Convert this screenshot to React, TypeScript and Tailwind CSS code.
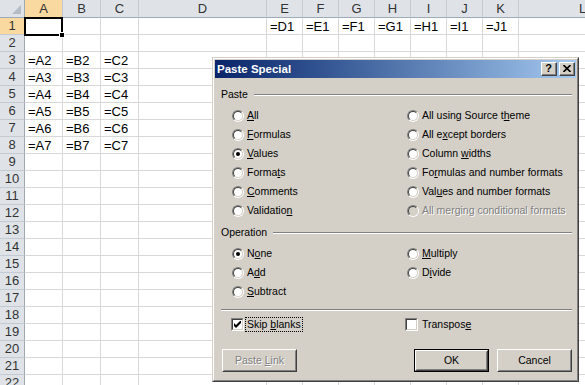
import React from "react";

const COLS = ["A", "B", "C", "D", "E", "F", "G", "H", "I", "J", "K", "L"];

function cellText(row: number, col: string): string {
  if (row === 1) {
    const idx = COLS.indexOf(col);
    if (idx >= 4 && idx <= 10) return `=${COLS[idx - 1]}1`;
  }
  if (row >= 3 && row <= 8 && ["A", "B", "C"].includes(col)) {
    return `=${col}${row - 1}`;
  }
  return "";
}

function Radio({ checked, disabled }: { checked?: boolean; disabled?: boolean }) {
  return (
    <span className="ml-px flex h-[12px] w-[12px] shrink-0 rounded-full border border-t-[#808080] border-l-[#808080] border-r-white border-b-white">
      <span
        className={`flex flex-1 items-center justify-center rounded-full border border-t-[#404040] border-l-[#404040] border-r-[#d4d0c8] border-b-[#d4d0c8] ${
          disabled ? "bg-[#d4d0c8]" : "bg-white"
        }`}
      >
        {checked && <span className="h-[4px] w-[4px] rounded-full bg-black" />}
      </span>
    </span>
  );
}

function Checkbox({ checked }: { checked?: boolean }) {
  return (
    <span className="flex h-[13px] w-[13px] shrink-0 border border-t-[#808080] border-l-[#808080] border-r-white border-b-white">
      <span className="flex flex-1 items-center justify-center border border-t-[#404040] border-l-[#404040] border-r-[#d4d0c8] border-b-[#d4d0c8] bg-white">
        {checked && (
          <svg width="7" height="7" viewBox="0 0 7 7">
            <path d="M0 2v3l2 2 5-5V-1L2 4z" fill="#000" />
          </svg>
        )}
      </span>
    </span>
  );
}

function Option({
  children,
  checked,
  disabled,
}: {
  children: React.ReactNode;
  checked?: boolean;
  disabled?: boolean;
}) {
  return (
    <div className="flex h-[19px] min-w-0 items-center gap-[3px]">
      <Radio checked={checked} disabled={disabled} />
      <span
        className={
          disabled
            ? "whitespace-nowrap text-[#808080] [text-shadow:1px_1px_0_#fff]"
            : "whitespace-nowrap"
        }
      >
        {children}
      </span>
    </div>
  );
}

function GroupLabel({ children }: { children: React.ReactNode }) {
  return (
    <div className="flex h-[13px] items-center">
      <span>{children}</span>
      <div className="ml-[6px] h-[2px] flex-1 border-t border-b border-t-[#808080] border-b-white" />
    </div>
  );
}

function Button({
  children,
  isDefault,
  disabled,
}: {
  children: React.ReactNode;
  isDefault?: boolean;
  disabled?: boolean;
}) {
  return (
    <div className={`flex h-[23px] w-[75px] ${isDefault ? "border border-black" : ""}`}>
      <div className="flex flex-1 border border-t-white border-l-white border-r-[#404040] border-b-[#404040]">
        <div
          className={`flex flex-1 items-center justify-center border border-t-[#d4d0c8] border-l-[#d4d0c8] border-r-[#808080] border-b-[#808080] ${
            disabled ? "text-[#808080] [text-shadow:1px_1px_0_#fff]" : ""
          }`}
        >
          <span className="whitespace-pre">{children}</span>
        </div>
      </div>
    </div>
  );
}

function TitleButton({ children }: { children: React.ReactNode }) {
  return (
    <div className="flex h-[14px] w-[16px] border border-t-white border-l-white border-r-[#404040] border-b-[#404040] bg-[#d4d0c8]">
      <div className="flex flex-1 items-center justify-center border-r border-b border-r-[#808080] border-b-[#808080] text-[11px] font-bold leading-none text-black">
        {children}
      </div>
    </div>
  );
}

function Sheet() {
  const rows = Array.from({ length: 22 }, (_, i) => i + 1);
  return (
    <div className="grid grid-cols-[25px_38px_38px_38px_128px_36px_36px_36px_36px_36px_36px_36px_128px] grid-rows-[18px_repeat(22,17px)] font-['Liberation_Sans',Arial,sans-serif] text-[13px] leading-[16px] text-black">
      <div className="relative border-r border-b border-r-[#a0a8b2] border-b-[#9eaab6] bg-[#dfe3e8]">
        <svg className="absolute right-[3px] bottom-[3px]" width="9" height="9" viewBox="0 0 9 9">
          <path d="M9 0V9H0z" fill="#b4bcc6" />
        </svg>
      </div>
      {COLS.map((c) => (
        <div
          key={c}
          className={`flex items-center justify-center border-r border-b border-r-[#c4cad2] ${
            c === "A" ? "border-b-[#f2b24e] bg-[#f9d99f]" : "border-b-[#9eaab6] bg-[#dfe3e8]"
          } text-[#333]`}
        >
          {c}
        </div>
      ))}
      {rows.map((r) => (
        <React.Fragment key={r}>
          <div
            className={`flex items-center justify-center border-r border-b border-r-[#a0a8b2] border-b-[#c4cad2] text-[#333] ${
              r === 1 ? "bg-[#f9d99f]" : "bg-[#dfe3e8]"
            }`}
          >
            {r}
          </div>
          {COLS.map((c) => (
            <div
              key={c}
              className="overflow-hidden whitespace-nowrap border-r border-b border-[#d8d8d8] bg-white pl-[3px] leading-[17px]"
            >
              {cellText(r, c)}
            </div>
          ))}
        </React.Fragment>
      ))}
    </div>
  );
}

function PasteSpecial() {
  return (
    <div className="absolute left-[212px] top-[57px] flex h-[325px] w-[367px] border border-t-[#d4d0c8] border-l-[#d4d0c8] border-r-[#404040] border-b-[#404040] font-['Liberation_Sans',Arial,sans-serif] text-[10.5px] leading-[13px] text-black">
      <div className="flex min-w-0 flex-1 flex-col overflow-hidden border border-t-white border-l-white border-r-[#808080] border-b-[#808080] bg-[#d4d0c8] p-px">
        <div className="flex h-[18px] shrink-0 items-center justify-between bg-gradient-to-r from-[#0a246a] to-[#a6caf0] pl-[2px] pr-[1px]">
          <span className="text-[11.5px] font-bold text-white">Paste Special</span>
          <div className="flex gap-[2px]">
            <TitleButton>?</TitleButton>
            <TitleButton>
              <svg width="8" height="7" viewBox="0 0 8 7">
                <path d="M0.5 0L7.5 7M7.5 0L0.5 7" stroke="#000" strokeWidth="1.6" />
              </svg>
            </TitleButton>
          </div>
        </div>

        <div className="flex min-w-0 flex-1 flex-col pl-[6px] pr-[4px] pt-[10px]">
          <GroupLabel>Paste</GroupLabel>
          <div className="mt-[5px] grid grid-cols-[175px_minmax(0,1fr)] pl-[10px]">
            <Option>
              <u>A</u>ll
            </Option>
            <Option>
              All using Source t<u>h</u>eme
            </Option>
            <Option>
              <u>F</u>ormulas
            </Option>
            <Option>
              All e<u>x</u>cept borders
            </Option>
            <Option checked>
              <u>V</u>alues
            </Option>
            <Option>
              Column <u>w</u>idths
            </Option>
            <Option>
              Forma<u>t</u>s
            </Option>
            <Option>
              Fo<u>r</u>mulas and number formats
            </Option>
            <Option>
              <u>C</u>omments
            </Option>
            <Option>
              Val<u>u</u>es and number formats
            </Option>
            <Option>
              Validatio<u>n</u>
            </Option>
            <Option disabled>All merging conditional formats</Option>
          </div>

          <div className="mt-[6px]">
            <GroupLabel>Operation</GroupLabel>
          </div>
          <div className="mt-[5px] grid grid-cols-[175px_minmax(0,1fr)] pl-[10px]">
            <Option checked>
              N<u>o</u>ne
            </Option>
            <Option>
              <u>M</u>ultiply
            </Option>
            <Option>
              A<u>d</u>d
            </Option>
            <Option>
              D<u>i</u>vide
            </Option>
            <Option>
              <u>S</u>ubtract
            </Option>
          </div>

          <div className="mt-[8px] h-[2px] border-t border-b border-t-[#808080] border-b-white" />

          <div className="mt-[4px] grid grid-cols-[174px_minmax(0,1fr)] pl-[10px]">
            <div className="flex h-[19px] items-center gap-[2px]">
              <Checkbox checked />
              <span className="whitespace-nowrap px-[1px] outline outline-1 outline-dotted outline-black">
                Skip <u>b</u>lanks
              </span>
            </div>
            <div className="flex h-[19px] items-center gap-[4px]">
              <Checkbox />
              <span className="whitespace-nowrap">
                Transpos<u>e</u>
              </span>
            </div>
          </div>

          <div className="mt-[15px] flex justify-between pl-px">
            <Button disabled>
              Paste <u>L</u>ink
            </Button>
            <div className="flex gap-[8px]">
              <Button isDefault>OK</Button>
              <Button>Cancel</Button>
            </div>
          </div>
        </div>
      </div>
    </div>
  );
}

export default function App() {
  return (
    <div className="relative h-[385px] w-[585px] overflow-hidden bg-white">
      <Sheet />
      <div className="absolute left-[24px] top-[17px] h-[19px] w-[39px] border-2 border-black" />
      <div className="absolute left-[59px] top-[32px] h-[6px] w-[6px] border border-white bg-black" />
      <PasteSpecial />
    </div>
  );
}
